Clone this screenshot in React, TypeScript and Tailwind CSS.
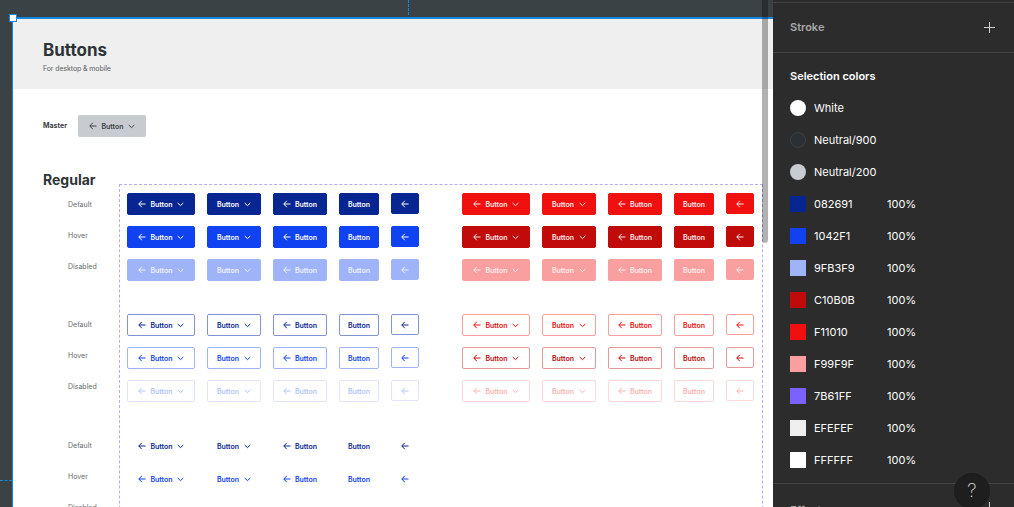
import React from "react";

const FONT = "font-['Inter',sans-serif]";

type Look = {
  box: string;
  text: string;
};

const looks: Record<string, Look> = {
  blueSolid: { box: "bg-[#082691] border-[#082691]", text: "text-white" },
  blueSolidHover: { box: "bg-[#1042F1] border-[#1042F1]", text: "text-white" },
  blueSolidOff: { box: "bg-[#9FB3F9] border-[#9FB3F9]", text: "text-white/80" },
  redSolid: { box: "bg-[#F11010] border-[#F11010]", text: "text-white/90" },
  redSolidHover: { box: "bg-[#C10B0B] border-[#C10B0B]", text: "text-white/90" },
  redSolidOff: { box: "bg-[#F99F9F] border-[#F99F9F]", text: "text-white/80" },
  blueLine: { box: "bg-white border-[#8494d2]", text: "text-[#082691]" },
  blueLineHover: { box: "bg-white border-[#9FB3F9]", text: "text-[#1042F1]" },
  blueLineOff: { box: "bg-white border-[#dfe5fd]", text: "text-[#b4c4fa]" },
  redLine: { box: "bg-white border-[#f99f9f]", text: "text-[#F11010]" },
  redLineHover: { box: "bg-white border-[#e39a9a]", text: "text-[#C10B0B]" },
  redLineOff: { box: "bg-white border-[#fcd9d9]", text: "text-[#fbb4b4]" },
  blueGhost: { box: "border-transparent", text: "text-[#082691]" },
  blueGhostHover: { box: "border-transparent", text: "text-[#1042F1]" },
  blueGhostOff: { box: "border-transparent", text: "text-[#b4c4fa]" },
};

function ArrowLeft() {
  return (
    <svg width="8" height="8" viewBox="0 0 8 8" fill="none" stroke="currentColor" strokeWidth="1" className="shrink-0">
      <path d="M7.5 4H0.8M3.8 0.8L0.8 4L3.8 7.2" />
    </svg>
  );
}

function ChevronDown() {
  return (
    <svg width="7" height="5" viewBox="0 0 7 5" fill="none" stroke="currentColor" strokeWidth="1" className="shrink-0">
      <path d="M0.7 1L3.5 3.6L6.3 1" />
    </svg>
  );
}

function Label() {
  return <span className="text-[7px] leading-[9px] font-semibold">Button</span>;
}

// the five sizes of the set: both icons, chevron only, arrow only, plain, icon only
function ButtonSet({ look }: { look: Look }) {
  const base = `flex items-center justify-center rounded-[2px] border ${look.box} ${look.text}`;
  return (
    <div className="flex items-start gap-3">
      <div className={`${base} w-[68px] h-[22px] gap-[4px]`}>
        <ArrowLeft />
        <Label />
        <ChevronDown />
      </div>
      <div className={`${base} w-[54px] h-[22px] gap-[5px]`}>
        <Label />
        <ChevronDown />
      </div>
      <div className={`${base} w-[54px] h-[22px] gap-[4px]`}>
        <ArrowLeft />
        <Label />
      </div>
      <div className={`${base} w-[40px] h-[22px]`}>
        <Label />
      </div>
      <div className={`${base} w-[28px] h-[21px]`}>
        <ArrowLeft />
      </div>
    </div>
  );
}

function StateRow({ left, right }: { left: string; right?: string }) {
  return (
    <div className="flex items-start gap-[43px]">
      <ButtonSet look={looks[left]} />
      {right && <ButtonSet look={looks[right]} />}
    </div>
  );
}

const stateNames = ["Default", "Hover", "Disabled"];

function StateLabels() {
  return (
    <div>
      {stateNames.map((name) => (
        <div key={name} className="h-[31px] flex items-center text-[7px] text-[#666b6e]">
          {name}
        </div>
      ))}
    </div>
  );
}

const colorRows = [
  { name: "082691", color: "bg-[#082691]" },
  { name: "1042F1", color: "bg-[#1042F1]" },
  { name: "9FB3F9", color: "bg-[#9FB3F9]" },
  { name: "C10B0B", color: "bg-[#C10B0B]" },
  { name: "F11010", color: "bg-[#F11010]" },
  { name: "F99F9F", color: "bg-[#F99F9F]" },
  { name: "7B61FF", color: "bg-[#7B61FF]" },
  { name: "EFEFEF", color: "bg-[#EFEFEF]" },
  { name: "FFFFFF", color: "bg-[#FFFFFF]" },
];

function PlusIcon() {
  return (
    <svg width="11" height="11" viewBox="0 0 11 11" stroke="#d0d0d0" strokeWidth="1">
      <path d="M5.5 0V11M0 5.5H11" />
    </svg>
  );
}

function Sidebar() {
  return (
    <aside className="relative w-[241px] h-full shrink-0 bg-[#2c2c2c] pt-[2px] overflow-hidden text-white text-[11px]">
      <div className="h-[51px] border-y border-[#444444] flex items-center justify-between pl-[17px] pr-[19px]">
        <span className="font-semibold text-[#a8a8a8]">Stroke</span>
        <PlusIcon />
      </div>
      <div className="h-[431px] pl-[17px] border-b border-[#444444]">
        <div className="h-[39px] pt-[15px] leading-[16px] font-semibold">Selection colors</div>
        {["White", "Neutral/900", "Neutral/200"].map((name, i) => (
          <div key={name} className="h-[32px] flex items-center">
            <div
              className={`w-4 h-4 rounded-full mr-2 ${
                i === 0 ? "bg-white" : i === 1 ? "bg-[#2a3033] border border-[#3b4144]" : "bg-[#c8ccd0]"
              }`}
            />
            {name}
          </div>
        ))}
        {colorRows.map((row) => (
          <div key={row.name} className="h-[32px] flex items-center">
            <div className={`w-4 h-4 mr-2 ${row.color}`} />
            <span className="w-[73px]">{row.name}</span>
            <span>100%</span>
          </div>
        ))}
      </div>
      <div className="flex justify-between pl-[17px] pr-[19px] pt-[18px]">
        <span className="font-semibold text-[#a8a8a8]">Effects</span>
        <PlusIcon />
      </div>
      {/* help button sits on top of the panel */}
      <div className="absolute left-[181px] top-[473px] w-9 h-9 rounded-full bg-[#1e1e1e] flex items-center justify-center text-[19px] font-extralight text-[#d8d8d8]">
        ?
      </div>
    </aside>
  );
}

export default function App() {
  return (
    <div className={`flex w-[1014px] h-[507px] overflow-hidden ${FONT}`}>
      <main className="relative flex-1 min-w-0 h-full bg-[#3a4245] pl-3 pt-[17px] overflow-hidden">
        <div className="w-[780px] h-[600px] bg-white border-l border-t-2 border-[#1688dc]">
          <header className="h-[70px] bg-[#EFEFEF] pl-[30px] pt-[20px]">
            <h1 className="text-[17px] leading-[22px] font-bold text-[#2e3436]">Buttons</h1>
            <p className="mt-[3px] text-[7px] leading-[9px] tracking-[-0.1px] text-[#5b6063]">For desktop &amp; mobile</p>
          </header>

          <div className="pl-[30px] pt-[26px] flex items-center">
            <span className="w-[35px] text-[7px] font-bold text-[#3a4245]">Master</span>
            <div className="w-[68px] h-[22px] rounded-[2px] bg-[#c8ccd0] text-[#3a4245] flex items-center justify-center gap-[4px]">
              <ArrowLeft />
              <Label />
              <ChevronDown />
            </div>
          </div>

          <h2 className="mt-[35px] -mb-[4px] h-[16px] pl-[30px] text-[14px] leading-[16px] font-bold text-[#2e3436]">
            Regular
          </h2>

          <div className="flex items-start">
            <div className="w-[106px] pl-[55px] pt-[5.5px] flex flex-col gap-[27.5px]">
              <StateLabels />
              <StateLabels />
              <StateLabels />
            </div>
            <section className="w-[643.5px] h-[400px] border border-dashed border-[#b9a8ff] pl-[7px] pt-[8px] flex flex-col gap-[33px]">
              <div className="flex flex-col gap-[11px]">
                <StateRow left="blueSolid" right="redSolid" />
                <StateRow left="blueSolidHover" right="redSolidHover" />
                <StateRow left="blueSolidOff" right="redSolidOff" />
              </div>
              <div className="flex flex-col gap-[11px]">
                <StateRow left="blueLine" right="redLine" />
                <StateRow left="blueLineHover" right="redLineHover" />
                <StateRow left="blueLineOff" right="redLineOff" />
              </div>
              <div className="flex flex-col gap-[11px]">
                <StateRow left="blueGhost" />
                <StateRow left="blueGhostHover" />
                <StateRow left="blueGhostOff" />
              </div>
            </section>
          </div>
        </div>

        {/* selection handle and canvas guides over the frame */}
        <div className="absolute left-[9px] top-[14px] w-2 h-2 bg-white border border-[#1688dc]" />
        <div className="absolute left-[408px] top-0 h-[15px] border-l border-dashed border-[#1688dc]" />
        <div className="absolute left-0 top-[480px] w-3 border-t border-dashed border-[#1688dc]" />

        {/* canvas scrollbar, see-through so it darkens the canvas above the frame */}
        <div className="absolute left-[762px] top-0 w-[6px] h-[243px] rounded-b-[3px] bg-black/30" />
      </main>
      <Sidebar />
    </div>
  );
}
